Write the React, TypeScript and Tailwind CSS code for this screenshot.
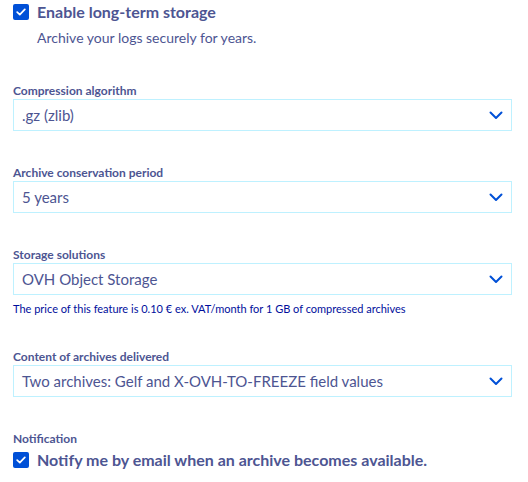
import React from "react";

const Check = () => (
  <span className="flex h-4 w-4 shrink-0 items-center justify-center rounded-[2px] bg-[#0050d7]">
    <svg width="10" height="8" viewBox="0 0 10 8" fill="none">
      <path d="M1.2 4.2 L3.8 6.6 L8.8 1.4" stroke="white" strokeWidth="1.7" strokeLinecap="round" strokeLinejoin="round" />
    </svg>
  </span>
);

const Chevron = () => (
  <svg width="14" height="9" viewBox="0 0 14 9" fill="none">
    <path d="M1.5 1.5 L7 7 L12.5 1.5" stroke="#0050d7" strokeWidth="2" strokeLinecap="round" strokeLinejoin="round" />
  </svg>
);

const Select = ({ label, value, help }: { label: string; value: string; help?: string }) => (
  <div className="flex flex-col">
    <div className="text-[12px] font-bold leading-[14px] text-[#4d5592]">{label}</div>
    <div className="mt-[1px] flex h-[32px] w-[499px] items-center justify-between border border-[#bef1ff] bg-white pl-[8px] pr-[8px]">
      <span className="text-[15px] text-[#4d5592]">{value}</span>
      <Chevron />
    </div>
    {help && <div className="mt-[7px] text-[11px] leading-[13px] text-[#000e9c]">{help}</div>}
  </div>
);

export default function App() {
  return (
    <div
      className="min-h-[482px] w-[528px] bg-white px-[13px] pt-[3px]"
      style={{ fontFamily: "Lato, 'Open Sans', sans-serif" }}
    >
      <div className="flex items-start gap-[8px]">
        <div className="pt-[1px]"><Check /></div>
        <div className="flex flex-col">
          <div className="text-[16px] font-bold leading-[18px] text-[#4d5592]">Enable long-term storage</div>
          <div className="mt-[9px] text-[14px] leading-[16px] text-[#4d5592]">Archive your logs securely for years.</div>
        </div>
      </div>
      <div className="mt-[38px] flex flex-col gap-[35px]">
        <Select label="Compression algorithm" value=".gz (zlib)" />
        <Select label="Archive conservation period" value="5 years" />
        <Select
          label="Storage solutions"
          value="OVH Object Storage"
          help="The price of this feature is 0.10 € ex. VAT/month for 1 GB of compressed archives"
        />
        <Select label="Content of archives delivered" value="Two archives: Gelf and X-OVH-TO-FREEZE field values" />
        <div className="flex flex-col">
          <div className="text-[12px] font-bold leading-[14px] text-[#4d5592]">Notification</div>
          <div className="mt-[3px] flex items-center gap-[8px]">
            <Check />
            <span className="text-[16px] font-bold leading-[22px] text-[#4d5592]">Notify me by email when an archive becomes available.</span>
          </div>
        </div>
      </div>
    </div>
  );
}
